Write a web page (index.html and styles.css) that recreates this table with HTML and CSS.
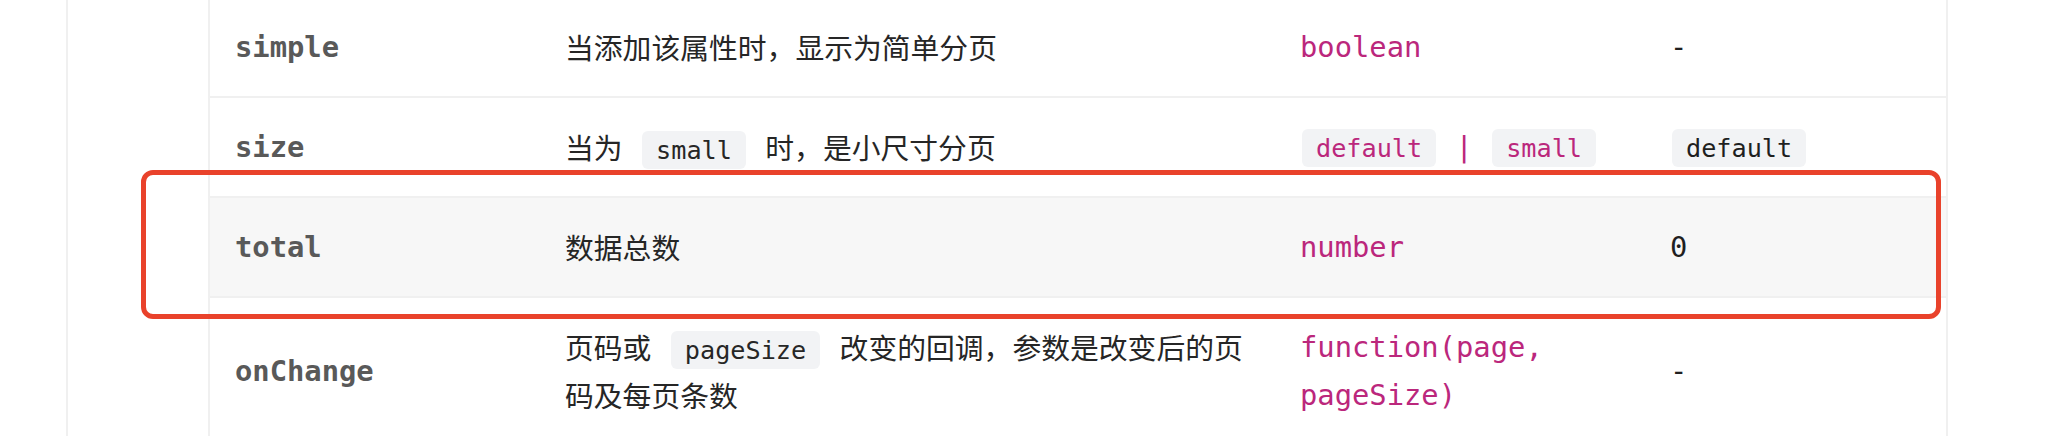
FILE: index.html
```html
<!DOCTYPE html>
<html lang="zh-CN">
<head>
<meta charset="utf-8">
<title>Pagination API</title>
<link rel="stylesheet" href="styles.css">
</head>
<body>
<div class="page">
  <table class="api">
    <colgroup>
      <col class="c-name">
      <col class="c-desc">
      <col class="c-type">
      <col class="c-def">
    </colgroup>
    <tbody>
      <tr>
        <td class="name">simple</td>
        <td class="desc">当添加该属性时，显示为简单分页</td>
        <td class="type">boolean</td>
        <td class="def">-</td>
      </tr>
      <tr>
        <td class="name">size</td>
        <td class="desc">当为 <code>small</code> 时，是小尺寸分页</td>
        <td class="type"><code>default</code> | <code>small</code></td>
        <td class="def"><code>default</code></td>
      </tr>
      <tr class="hl">
        <td class="name">total</td>
        <td class="desc">数据总数</td>
        <td class="type">number</td>
        <td class="def">0</td>
      </tr>
      <tr>
        <td class="name">onChange</td>
        <td class="desc">页码或 <code>pageSize</code> 改变的回调，参数是改变后的页码及每页条数</td>
        <td class="type">function(page, pageSize)</td>
        <td class="def">-</td>
      </tr>
    </tbody>
  </table>
  <div class="mark"></div>
</div>
</body>
</html>
```

FILE: styles.css
```css
html, body {
  margin: 0;
  padding: 0;
  background: #ffffff;
  overflow: hidden;
}

body {
  font-family: "Noto Sans CJK SC", "Noto Sans", sans-serif;
  font-size: 28.8px;
  line-height: 48px;
  color: #262626;
}

.page {
  position: relative;
  margin-left: 66px;
  border-left: 2px solid #f0f0f0;
  padding-left: 140px;
  min-height: 100vh;
}

.api {
  width: 1740px;
  margin-top: -2px;
  table-layout: fixed;
  border-collapse: separate;
  border-spacing: 0;
  border-left: 2px solid #f0f0f0;
  border-right: 2px solid #f0f0f0;
}

.c-name { width: 330px; }
.c-desc { width: 735px; }
.c-type { width: 370px; }
.c-def { width: 301px; }

.api td {
  padding: 25px;
  border-bottom: 2px solid #f0f0f0;
  vertical-align: middle;
  text-align: left;
}

.api tr.hl td {
  background: #f7f7f7;
}

.name {
  font-family: "DejaVu Sans Mono", "Liberation Mono", monospace;
  font-weight: 700;
  color: #595959;
}

.type {
  font-family: "DejaVu Sans Mono", "Liberation Mono", monospace;
  color: #bb277c;
}

.def {
  font-family: "DejaVu Sans Mono", "Liberation Mono", monospace;
  color: #1f1f1f;
}

code {
  font-family: "DejaVu Sans Mono", "Liberation Mono", monospace;
  font-size: 25.2px;
  line-height: 1;
  padding: 5px 14px 4px;
  margin: 0 2px;
  background: #f2f3f5;
  border-radius: 6px;
}

.desc code {
  color: #262626;
  margin: 0 13px;
}

.type code {
  color: #bb277c;
}

.def code {
  color: #1f1f1f;
}

.mark {
  position: absolute;
  left: 73px;
  top: 172px;
  width: 1800px;
  height: 149px;
  box-sizing: border-box;
  border: 5px solid #e9422b;
  border-radius: 12px;
  pointer-events: none;
}
```
